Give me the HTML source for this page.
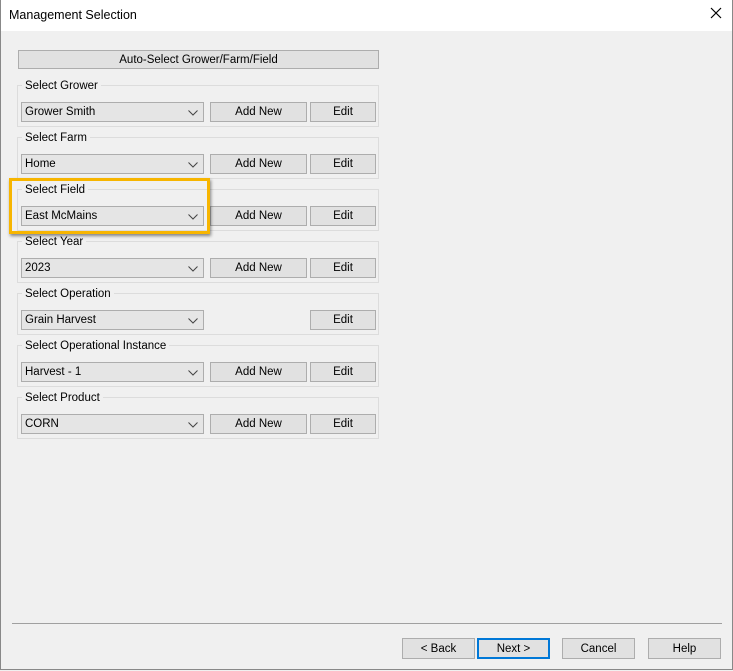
<!DOCTYPE html>
<html><head><style>
body{margin:0;width:733px;height:671px;position:relative;background:#f0f0f0;font-family:"Liberation Sans",sans-serif;font-size:11.5px;color:#000;overflow:hidden}
.win{position:absolute;left:0;top:0;width:731px;height:669px;border:1px solid #888;border-top:none}
.title{position:absolute;left:0;top:0;width:733px;height:31px;background:#fff}
.title span{position:absolute;left:9px;top:8px;font-size:12.5px}
.x{position:absolute;left:710px;top:7px}
.b{position:absolute;background:#e1e1e1;border:1px solid #adadad;box-sizing:border-box;text-align:center;line-height:19px}
.grp{position:absolute;left:17px;width:362px;height:42px;border:1px solid #dcdcdc;box-sizing:border-box}
.lbl{position:absolute;left:22px;background:#f0f0f0;padding:0 3px;line-height:14px}
.cb{position:absolute;left:21px;width:183px;height:20px;background:#e5e5e5;border:1px solid #adadad;box-sizing:border-box;line-height:18px;padding-left:3px}
.cb svg{position:absolute;right:5px;top:7px}
</style></head><body>
<div class="title"><span>Management Selection</span>
<svg class="x" width="12" height="12"><path d="M1 1L11 11M11 1L1 11" stroke="#000" stroke-width="1.2"/></svg></div>
<div class="win"></div>
<div class="b" style="left:18px;top:50px;width:361px;height:19px;line-height:19px">Auto-Select Grower/Farm/Field</div>

<div class="grp" style="top:85px"></div><div class="lbl" style="top:79px">Select Grower</div>
<div class="cb" style="top:102px">Grower Smith<svg width="10" height="6"><path d="M0.5 0.5L5 5L9.5 0.5" stroke="#444" fill="none"/></svg></div>
<div class="b" style="left:210px;top:102px;width:97px;height:20px">Add New</div><div class="b" style="left:310px;top:102px;width:66px;height:20px">Edit</div>

<div class="grp" style="top:137px"></div><div class="lbl" style="top:131px">Select Farm</div>
<div class="cb" style="top:154px">Home<svg width="10" height="6"><path d="M0.5 0.5L5 5L9.5 0.5" stroke="#444" fill="none"/></svg></div>
<div class="b" style="left:210px;top:154px;width:97px;height:20px">Add New</div><div class="b" style="left:310px;top:154px;width:66px;height:20px">Edit</div>

<div class="grp" style="top:189px"></div><div class="lbl" style="top:183px">Select Field</div>
<div class="cb" style="top:206px">East McMains<svg width="10" height="6"><path d="M0.5 0.5L5 5L9.5 0.5" stroke="#444" fill="none"/></svg></div>
<div class="b" style="left:210px;top:206px;width:97px;height:20px">Add New</div><div class="b" style="left:310px;top:206px;width:66px;height:20px">Edit</div>

<div class="grp" style="top:241px"></div><div class="lbl" style="top:235px">Select Year</div>
<div class="cb" style="top:258px">2023<svg width="10" height="6"><path d="M0.5 0.5L5 5L9.5 0.5" stroke="#444" fill="none"/></svg></div>
<div class="b" style="left:210px;top:258px;width:97px;height:20px">Add New</div><div class="b" style="left:310px;top:258px;width:66px;height:20px">Edit</div>

<div class="grp" style="top:293px"></div><div class="lbl" style="top:287px">Select Operation</div>
<div class="cb" style="top:310px">Grain Harvest<svg width="10" height="6"><path d="M0.5 0.5L5 5L9.5 0.5" stroke="#444" fill="none"/></svg></div>
<div class="b" style="left:310px;top:310px;width:66px;height:20px">Edit</div>

<div class="grp" style="top:345px"></div><div class="lbl" style="top:339px">Select Operational Instance</div>
<div class="cb" style="top:362px">Harvest - 1<svg width="10" height="6"><path d="M0.5 0.5L5 5L9.5 0.5" stroke="#444" fill="none"/></svg></div>
<div class="b" style="left:210px;top:362px;width:97px;height:20px">Add New</div><div class="b" style="left:310px;top:362px;width:66px;height:20px">Edit</div>

<div class="grp" style="top:397px"></div><div class="lbl" style="top:391px">Select Product</div>
<div class="cb" style="top:414px">CORN<svg width="10" height="6"><path d="M0.5 0.5L5 5L9.5 0.5" stroke="#444" fill="none"/></svg></div>
<div class="b" style="left:210px;top:414px;width:97px;height:20px">Add New</div><div class="b" style="left:310px;top:414px;width:66px;height:20px">Edit</div>

<div style="position:absolute;left:9px;top:178px;width:201px;height:56px;border:3px solid #f7b500;box-sizing:border-box;box-shadow:1px 2px 3px rgba(0,0,0,0.45)"></div>

<div style="position:absolute;left:12px;top:623px;width:710px;height:1px;background:#a0a0a0"></div>
<div class="b" style="left:402px;top:638px;width:73px;height:21px;line-height:21px">&lt; Back</div>
<div class="b" style="left:477px;top:638px;width:73px;height:21px;line-height:19px;border:2px solid #0078d7">Next &gt;</div>
<div class="b" style="left:562px;top:638px;width:73px;height:21px;line-height:21px">Cancel</div>
<div class="b" style="left:648px;top:638px;width:73px;height:21px;line-height:21px">Help</div>
</body></html>
